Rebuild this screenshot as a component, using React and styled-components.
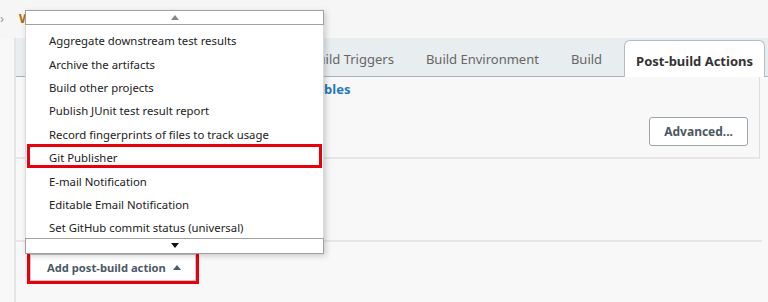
import React from 'react';
import styled, { createGlobalStyle } from 'styled-components';

const GlobalStyle = createGlobalStyle`
  html, body {
    margin: 0;
    padding: 0;
    background: #f8f8f8;
    font-family: "Noto Sans", "Open Sans", sans-serif;
  }
  * {
    box-sizing: border-box;
  }
`;

const Page = styled.div`
  position: relative;
  width: 768px;
  height: 302px;
  overflow: hidden;
  background: #f8f8f8;
`;

const Breadcrumbs = styled.div`
  height: 38px;
  display: flex;
  align-items: center;
  gap: 15px;
  padding: 0 0 2px 0;
  background: #f6f6f6;
  font-size: 13px;
`;

const Crumb = styled.span`
  color: ${p => (p.$sep ? '#999' : '#b36b00')};
  font-weight: ${p => (p.$sep ? 400 : 700)};
`;

const Body = styled.div`
  display: flex;
  height: 264px;
`;

const Gutter = styled.div`
  width: 16px;
  flex: none;
  border-right: 2px solid #e4e4e4;
`;

const Panel = styled.div`
  flex: 1;
  display: flex;
  flex-direction: column;
`;

const TabBar = styled.div`
  height: 39px;
  display: flex;
  justify-content: flex-end;
  align-items: flex-end;
  padding-right: 3px;
  background: #e8edf0;
  border-bottom: 1px solid #a7b1b8;
`;

const Tab = styled.div`
  height: ${p => (p.$active ? '37px' : '38px')};
  display: flex;
  align-items: center;
  padding: ${p => (p.$active ? '3px 11px 0' : '4px 16px 0')};
  margin-left: ${p => (p.$active ? '6px' : '0')};
  font-size: 13px;
  font-weight: ${p => (p.$active ? 700 : 400)};
  color: ${p => (p.$active ? '#333' : '#666')};
  background: ${p => (p.$active ? '#fff' : 'transparent')};
  border: ${p => (p.$active ? '1px solid #b4bcc2' : 'none')};
  border-bottom: none;
  border-radius: 6px 6px 0 0;
  margin-bottom: ${p => (p.$active ? '-1px' : '0')};
  white-space: nowrap;
`;

const Section = styled.div`
  height: 82px;
  margin-right: 8px;
  border-right: 1px solid #dedede;
  border-bottom: 2px solid #e6e6e6;
  display: flex;
  flex-direction: column;
`;

const SectionTitle = styled.div`
  padding: 3px 0 0 147px;
  font-size: 13px;
  font-weight: 700;
  color: #1d7ac0;
  white-space: nowrap;
`;

const SectionActions = styled.div`
  display: flex;
  justify-content: flex-end;
  padding: 19px 11px 0 0;
`;

const Button = styled.button`
  height: 29px;
  padding: 0 14px;
  background: #fff;
  border: 1px solid #9ba5ac;
  border-radius: 3px;
  font-family: inherit;
  font-size: 12px;
  font-weight: 700;
  color: #4b5761;
`;

const Divider = styled.div`
  height: 2px;
  margin: 81px 6px 0 0;
  background: #e6e6e6;
`;

const AddArea = styled.div`
  padding: 9px 0 0 11px;
`;

const Highlight = styled.div`
  display: inline-flex;
  border: 3px solid #e8000b;
`;

const AddButton = styled.div`
  display: flex;
  align-items: center;
  gap: 7px;
  height: 27px;
  padding: 0 14px 0 16px;
  background: #fff;
  border: 1px solid #c8c8c8;
  font-size: 11.2px;
  font-weight: 700;
  color: #4b5a68;
`;

const Menu = styled.div`
  position: absolute;
  left: 25px;
  top: 10px;
  width: 299px;
  display: flex;
  flex-direction: column;
  box-shadow: 2px 2px 6px rgba(0, 0, 0, 0.18);
`;

const Scroller = styled.div`
  height: ${p => (p.$top ? '15px' : '16px')};
  display: flex;
  align-items: center;
  justify-content: center;
  background: #fff;
  border: 1px solid #a0a0a0;
`;

const MenuList = styled.div`
  background: #fff;
  border-left: 1px solid #d8d8d8;
  border-right: 1px solid #d8d8d8;
  padding: 2px 0 0;
`;

const MenuItem = styled.div`
  height: ${p => (p.$marked ? '24px' : '23.4px')};
  margin: ${p => (p.$marked ? '-0.3px 1px -0.3px 1px' : '0')};
  display: flex;
  align-items: center;
  padding: ${p => (p.$marked ? '3px 0 0 19px' : '4px 0 0 23px')};
  border: ${p => (p.$marked ? '3px solid #e8000b' : 'none')};
  font-size: 11.35px;
  color: #222;
  white-space: nowrap;
`;

const Arrow = ({ up, color }) => (
  <svg width="8" height="5" viewBox="0 0 8 5">
    <polygon points={up ? '0,5 8,5 4,0' : '0,0 8,0 4,5'} fill={color} />
  </svg>
);

const items = [
  'Aggregate downstream test results',
  'Archive the artifacts',
  'Build other projects',
  'Publish JUnit test result report',
  'Record fingerprints of files to track usage',
  'Git Publisher',
  'E-mail Notification',
  'Editable Email Notification',
  'Set GitHub commit status (universal)',
];

const tabs = ['General', 'Source Code Management', 'Build Triggers', 'Build Environment', 'Build'];

export default function App() {
  return (
    <Page>
      <GlobalStyle />
      <Breadcrumbs>
        <Crumb $sep>›</Crumb>
        <Crumb>WebApp</Crumb>
      </Breadcrumbs>
      <Body>
        <Gutter />
        <Panel>
          <TabBar>
            {tabs.map(t => (
              <Tab key={t}>{t}</Tab>
            ))}
            <Tab $active>Post-build Actions</Tab>
          </TabBar>
          <Section>
            <SectionTitle>Inject environment variables</SectionTitle>
            <SectionActions>
              <Button>Advanced...</Button>
            </SectionActions>
          </Section>
          <Divider />
          <AddArea>
            <Highlight>
              <AddButton>
                Add post-build action
                <Arrow up color="#4b5a68" />
              </AddButton>
            </Highlight>
          </AddArea>
        </Panel>
      </Body>
      <Menu>
        <Scroller $top>
          <Arrow up color="#888" />
        </Scroller>
        <MenuList>
          {items.map(i => (
            <MenuItem key={i} $marked={i === 'Git Publisher'}>
              {i}
            </MenuItem>
          ))}
        </MenuList>
        <Scroller>
          <Arrow color="#111" />
        </Scroller>
      </Menu>
    </Page>
  );
}
